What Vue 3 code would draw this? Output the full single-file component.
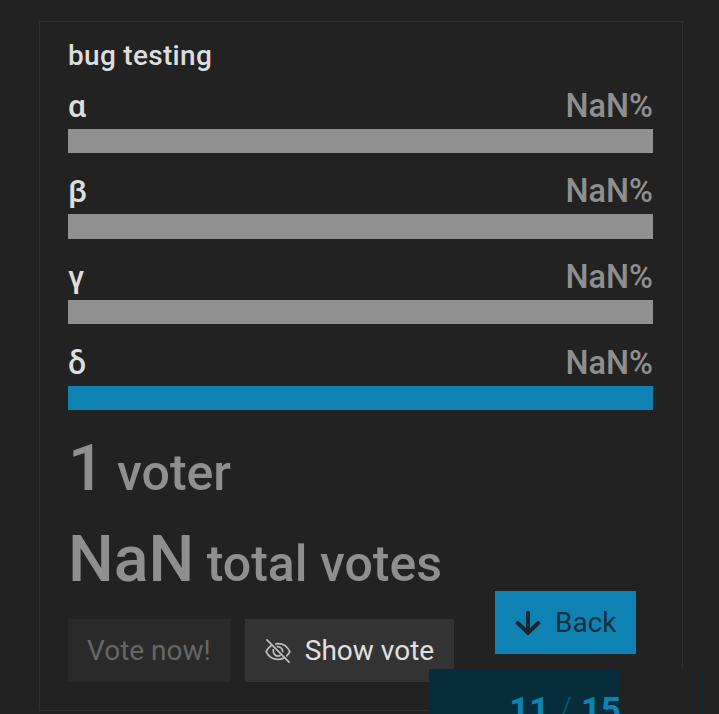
<script setup>
const options = [
  { label: 'α', value: 'NaN%', active: false },
  { label: 'β', value: 'NaN%', active: false },
  { label: 'γ', value: 'NaN%', active: false },
  { label: 'δ', value: 'NaN%', active: true }
]
</script>

<template>
  <main class="page">
    <section class="card">
      <h1 class="title">bug testing</h1>
      <div class="options">
        <div v-for="o in options" :key="o.label" class="option">
          <div class="row">
            <span class="label">{{ o.label }}</span>
            <span class="value">{{ o.value }}</span>
          </div>
          <div class="bar" :class="{ active: o.active }"></div>
        </div>
      </div>
      <p class="stat first"><span class="big">1</span> voter</p>
      <p class="stat second"><span class="big">NaN</span> total votes</p>
      <div class="actions">
        <button class="btn disabled">Vote now!</button>
        <button class="btn">
          <svg class="eye" viewBox="0 0 24 24" fill="none" stroke="currentColor" stroke-width="1.5" stroke-linecap="round" stroke-linejoin="round">
            <path d="M2.500 2.500 21.500 21.500" />
            <path d="M6 7.500C4 9 2.600 10.800 1.800 12.500c2 4 5.800 6.700 10.200 6.700 1.700 0 3.300-.4 4.800-1.100" />
            <path d="M10 5.900c.7-.1 1.300-.2 2-.2 4.400 0 8.200 2.800 10.200 6.800-.7 1.400-1.600 2.600-2.700 3.700" />
            <path d="M8 11c-.6 2.800 1.400 5.200 4 5.300.6 0 1.200-.1 1.700-.3" />
            <path d="M11.500 8.300c2.300-.3 4.500 1.700 4.500 4.200" />
          </svg>
          <span>Show vote</span>
        </button>
      </div>
    </section>
    <button class="back">
      <svg class="arrow" viewBox="0 0 24 24" fill="none" stroke="currentColor" stroke-width="3.600" stroke-linecap="round" stroke-linejoin="round">
        <path d="M12 2.500V21" />
        <path d="M2.500 12 12 21 21.500 12" />
      </svg>
      <span>Back</span>
    </button>
    <div class="progress">
      <div class="fill"></div>
      <span class="count">11 <span class="slash">/</span> 15</span>
    </div>
  </main>
</template>

<style>
html, body { margin: 0; background: #222222; }
</style>

<style scoped>
.page {
  position: relative;
  width: 719px;
  height: 714px;
  overflow: hidden;
  box-sizing: border-box;
  padding: 21px 36px 0 39px;
  background: #222222;
  font-family: Roboto, "Liberation Sans", sans-serif;
}
.card {
  box-sizing: border-box;
  width: 644px;
  height: 690px;
  padding: 17px 29px 0 28px;
  border: 1px solid #303030;
}
.title {
  margin: 0;
  font-size: 28px;
  letter-spacing: 0.3px;
  line-height: 34px;
  font-weight: 500;
  color: #dddddd;
}
.options { display: flex; flex-direction: column; margin-top: 13.6px; }
.option { height: 85.7px; }
.row {
  display: flex;
  justify-content: space-between;
  align-items: baseline;
  height: 42px;
  line-height: 38px;
  font-size: 32px;
}
.label { color: #dddddd; font-weight: 500; }
.value { color: #8f8f8f; font-size: 32.5px; font-weight: 500; }
.bar { height: 24.4px; background: #909090; }
.bar.active { background: #0e83b3; }
.stat {
  margin: 0;
  color: #8f8f8f;
  font-weight: 500;
  font-size: 50px;
  line-height: 68px;
}
.big { font-size: 64.500px; }
.first { margin-top: 5px; }
.second { margin-top: 18px; }
.actions { display: flex; gap: 15px; margin-top: 21px; }
.btn {
  display: flex;
  align-items: center;
  gap: 13px;
  height: 63px;
  padding: 0 20px 0 19px;
  border: 0;
  border-radius: 0;
  background: #333333;
  color: #e0e0e0;
  font: 400 28px Roboto, sans-serif;
}
.btn.disabled { background: #2a2a2a; color: #666666; padding-right: 19px; }
.eye { width: 28px; height: 28px; color: #bdbdbd; }
.back {
  position: absolute;
  left: 495px;
  top: 591px;
  display: flex;
  align-items: center;
  gap: 14px;
  box-sizing: border-box;
  width: 141px;
  height: 63px;
  padding: 0 0 0 20px;
  border: 0;
  background: #0e83b3;
  color: #14303f;
  font: 400 28px Roboto, sans-serif;
}
.arrow { width: 26px; height: 26px; color: #182630; }
.progress {
  position: absolute;
  left: 429px;
  top: 669px;
  box-sizing: border-box;
  width: 274px;
  height: 60px;
  padding-right: 2px;
  background: #222222;
  border: 1px solid #0c2a36;
  text-align: center;
}
.fill {
  position: absolute;
  left: 0;
  top: 0;
  bottom: 0;
  width: 190px;
  background: #072c3b;
}
.count {
  position: relative;
  display: block;
  margin-top: 20px;
  font-size: 35px;
  line-height: 42px;
  font-weight: 700;
  color: #0e83b3;
}
.slash { font-weight: 300; opacity: 0.5; }
</style>
